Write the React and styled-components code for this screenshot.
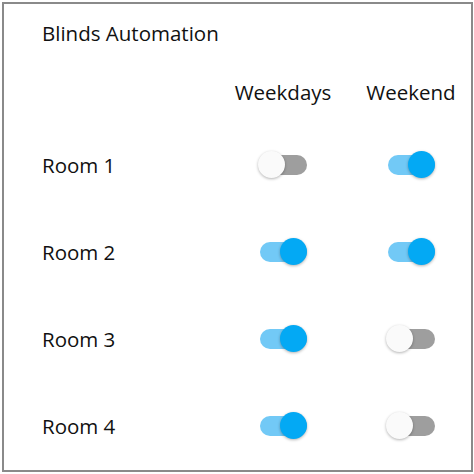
import React from 'react';
import styled, { createGlobalStyle } from 'styled-components';

const GlobalStyle = createGlobalStyle`
  html, body {
    margin: 0;
    padding: 0;
    background: #ffffff;
  }
  body {
    font-family: "Open Sans", "Noto Sans", sans-serif;
    color: #111111;
  }
`;

const Frame = styled.div`
  box-sizing: border-box;
  margin: 2px;
  width: 471px;
  height: 470px;
  border: 2px solid #8a8a8a;
  padding: 16px 0 0 38px;
`;

const Title = styled.h1`
  margin: 0;
  font-size: 20.5px;
  font-weight: 400;
  line-height: 26px;
`;

const Table = styled.div`
  display: grid;
  grid-template-columns: 1fr 120px 120px;
  grid-template-rows: 58px repeat(4, 87px);
  column-gap: 8px;
  margin-top: 17px;
  align-items: center;
  justify-items: center;
`;

const Header = styled.div`
  font-size: 20.5px;
  line-height: 26px;
`;

const RowLabel = styled.div`
  justify-self: start;
  font-size: 20.5px;
  line-height: 26px;
`;

const SwitchTrack = styled.div`
  position: relative;
  width: 47px;
  height: 20px;
  border-radius: 10px;
  background: ${p => (p.on ? '#72c9f6' : '#9e9e9e')};
`;

const Thumb = styled.div`
  position: absolute;
  top: -4px;
  left: ${p => (p.on ? '20px' : '-2px')};
  width: 27px;
  height: 27px;
  border-radius: 50%;
  background: ${p => (p.on ? '#03a9f4' : '#fafafa')};
  box-shadow: 0 1px 3px rgba(0, 0, 0, 0.3);
`;

function Switch({ on }) {
  return (
    <SwitchTrack on={on ? 1 : 0}>
      <Thumb on={on ? 1 : 0} />
    </SwitchTrack>
  );
}

const rooms = [
  { name: 'Room 1', weekdays: false, weekend: true },
  { name: 'Room 2', weekdays: true, weekend: true },
  { name: 'Room 3', weekdays: true, weekend: false },
  { name: 'Room 4', weekdays: true, weekend: false },
];

export default function App() {
  return (
    <>
      <GlobalStyle />
      <Frame>
        <Title>Blinds Automation</Title>
        <Table>
          <div />
          <Header>Weekdays</Header>
          <Header>Weekend</Header>
          {rooms.map(room => (
            <React.Fragment key={room.name}>
              <RowLabel>{room.name}</RowLabel>
              <Switch on={room.weekdays} />
              <Switch on={room.weekend} />
            </React.Fragment>
          ))}
        </Table>
      </Frame>
    </>
  );
}
